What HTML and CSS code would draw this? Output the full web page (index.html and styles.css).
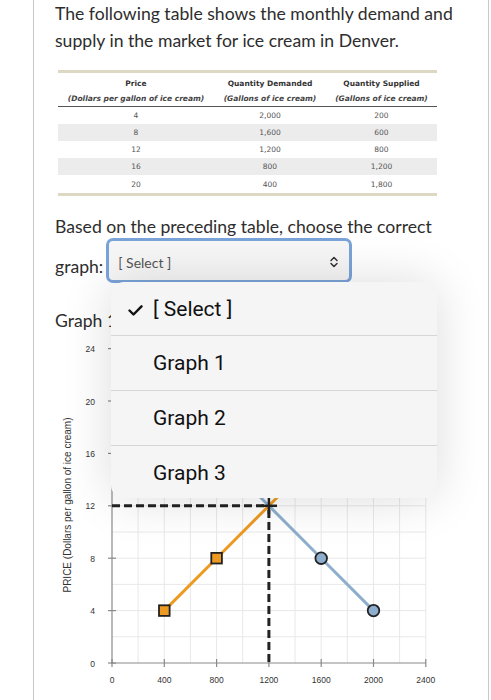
FILE: index.html
```html
<!DOCTYPE html>
<html>
<head>
<meta charset="utf-8">
<link rel="stylesheet" href="styles.css">
</head>
<body>
<div class="frame">
  <p class="intro">The following table shows the monthly demand and supply in the market for ice cream in Denver.</p>
  <table class="data">
    <thead>
      <tr class="h1"><th class="c1">Price</th><th class="c2">Quantity Demanded</th><th class="c3">Quantity Supplied</th></tr>
      <tr class="h2"><th>(Dollars per gallon of ice cream)</th><th>(Gallons of ice cream)</th><th>(Gallons of ice cream)</th></tr>
    </thead>
    <tbody>
      <tr><td>4</td><td>2,000</td><td>200</td></tr>
      <tr class="alt"><td>8</td><td>1,600</td><td>600</td></tr>
      <tr><td>12</td><td>1,200</td><td>800</td></tr>
      <tr class="alt"><td>16</td><td>800</td><td>1,200</td></tr>
      <tr><td>20</td><td>400</td><td>1,800</td></tr>
    </tbody>
  </table>
  <div class="question">
    <div class="qline">Based on the preceding table, choose the correct</div>
    <div class="qrow">
      <span>graph:</span>
      <div class="select">
        <span class="sel-text">[ Select ]</span>
        <svg class="chev" width="10" height="12" viewBox="0 0 10 12"><path d="M2 4.5 L5 1.5 L8 4.5 M2 7.5 L5 10.5 L8 7.5" fill="none" stroke="#333" stroke-width="1.5" stroke-linecap="round" stroke-linejoin="round"/></svg>
      </div>
    </div>
  </div>
  <div class="gtitle">Graph 1</div>
  <svg class="chart" width="454" height="370" viewBox="34 330 454 370">
    <g stroke="#e8e8e8" stroke-width="1">
      <line x1="138.1" y1="334" x2="138.1" y2="675"/><line x1="164.3" y1="334" x2="164.3" y2="675"/>
      <line x1="190.4" y1="334" x2="190.4" y2="675"/><line x1="216.6" y1="334" x2="216.6" y2="675"/>
      <line x1="242.7" y1="334" x2="242.7" y2="675"/><line x1="268.9" y1="334" x2="268.9" y2="675"/>
      <line x1="295" y1="334" x2="295" y2="675"/><line x1="321.2" y1="334" x2="321.2" y2="675"/>
      <line x1="347.3" y1="334" x2="347.3" y2="675"/><line x1="373.5" y1="334" x2="373.5" y2="675"/>
      <line x1="399.6" y1="334" x2="399.6" y2="675"/><line x1="425.8" y1="334" x2="425.8" y2="675"/>
      <line x1="112" y1="648.8" x2="425.8" y2="648.8"/><line x1="112" y1="622.6" x2="425.8" y2="622.6"/>
      <line x1="112" y1="596.4" x2="425.8" y2="596.4"/><line x1="112" y1="570.2" x2="425.8" y2="570.2"/>
      <line x1="112" y1="544" x2="425.8" y2="544"/><line x1="112" y1="517.8" x2="425.8" y2="517.8"/>
      <line x1="112" y1="491.6" x2="425.8" y2="491.6"/><line x1="112" y1="465.4" x2="425.8" y2="465.4"/>
      <line x1="112" y1="439.2" x2="425.8" y2="439.2"/><line x1="112" y1="413" x2="425.8" y2="413"/>
      <line x1="112" y1="386.8" x2="425.8" y2="386.8"/><line x1="112" y1="360.6" x2="425.8" y2="360.6"/>
      <line x1="112" y1="334.4" x2="425.8" y2="334.4"/>
    </g>
    <g stroke="#8a8a8a" stroke-width="1.2">
      <line x1="112" y1="334" x2="112" y2="676"/>
      <line x1="111" y1="675" x2="426" y2="675"/>
      <line x1="108" y1="675" x2="116" y2="675"/><line x1="108" y1="622.6" x2="116" y2="622.6"/>
      <line x1="108" y1="570.2" x2="116" y2="570.2"/><line x1="108" y1="517.8" x2="116" y2="517.8"/>
      <line x1="108" y1="465.4" x2="116" y2="465.4"/><line x1="108" y1="413" x2="116" y2="413"/>
      <line x1="108" y1="360.6" x2="116" y2="360.6"/>
      <line x1="112" y1="671" x2="112" y2="679"/><line x1="164.3" y1="671" x2="164.3" y2="679"/>
      <line x1="216.6" y1="671" x2="216.6" y2="679"/><line x1="268.9" y1="671" x2="268.9" y2="679"/>
      <line x1="321.2" y1="671" x2="321.2" y2="679"/><line x1="373.5" y1="671" x2="373.5" y2="679"/>
      <line x1="425.8" y1="671" x2="425.8" y2="679"/>
    </g>
    <g class="ticks" text-anchor="end">
      <text x="95" y="364">24</text><text x="95" y="416.5">20</text><text x="95" y="469">16</text>
      <text x="95" y="521">12</text><text x="95" y="573.5">8</text><text x="95" y="626">4</text>
      <text x="95" y="678.5">0</text>
    </g>
    <g class="ticks" text-anchor="middle">
      <text x="112" y="695">0</text><text x="164.3" y="695">400</text><text x="216.6" y="695">800</text>
      <text x="268.9" y="695">1200</text><text x="321.2" y="695">1600</text><text x="373.5" y="695">2000</text>
      <text x="425.8" y="695">2400</text>
    </g>
    <text class="ytitle" x="0" y="0" transform="translate(71 517) rotate(-90)" text-anchor="middle">PRICE (Dollars per gallon of ice cream)</text>
    <polyline points="164.3,622.6 216.6,570.2 268.9,517.8 321.2,465.4 373.5,413" fill="none" stroke="#ec9a22" stroke-width="3"/>
    <polyline points="373.5,622.6 321.2,570.2 268.9,517.8 216.6,465.4 164.3,413" fill="none" stroke="#8eaecd" stroke-width="3"/>
    <g stroke="#222" stroke-width="3" stroke-dasharray="8 4">
      <line x1="112" y1="517.8" x2="264" y2="517.8"/>
      <line x1="268.9" y1="522" x2="268.9" y2="675"/>
    </g>
    <g stroke="#222" stroke-width="2.5">
      <line x1="261" y1="517.8" x2="277" y2="517.8"/>
      <line x1="268.9" y1="510" x2="268.9" y2="526"/>
    </g>
    <rect x="159" y="617.3" width="10.6" height="10.6" fill="#ec9a22" stroke="#222" stroke-width="1.8"/>
    <rect x="211.3" y="564.9" width="10.6" height="10.6" fill="#ec9a22" stroke="#222" stroke-width="1.8"/>
    <circle cx="321.2" cy="570.2" r="5.8" fill="#8eaecd" stroke="#222" stroke-width="1.8"/>
    <circle cx="373.5" cy="622.6" r="5.8" fill="#8eaecd" stroke="#222" stroke-width="1.8"/>
  </svg>
  <div class="menu">
    <div class="item first"><svg class="check" width="15" height="11" viewBox="0 0 15 11"><path d="M1.5 5.5 L5.5 9.5 L13.5 1.3" fill="none" stroke="#111" stroke-width="2.4" stroke-linecap="round" stroke-linejoin="round"/></svg>[ Select ]</div>
    <div class="item">Graph 1</div>
    <div class="item">Graph 2</div>
    <div class="item">Graph 3</div>
  </div>
</div>
</body>
</html>
```

FILE: styles.css
```css
html, body {
  margin: 0;
  padding: 0;
  background: #ffffff;
}
body {
  width: 491px;
  height: 700px;
  overflow: hidden;
}
.frame {
  position: relative;
  margin-left: 33px;
  width: 433px;
  height: 700px;
  padding-left: 21px;
  border-left: 1px solid #c8c8c8;
  border-right: 1px solid #c8c8c8;
  font-family: Lato, "Liberation Sans", sans-serif;
  color: #2d2d2d;
}
.intro {
  margin: 0;
  font-size: 17.6px;
  line-height: 27px;
}
.data {
  margin: 16px 0 0 3px;
  width: 379px;
  border-collapse: collapse;
  font-family: "DejaVu Sans", Verdana, sans-serif;
  font-size: 7.5px;
  color: #333;
  border-top: 3px solid #dcd8c4;
  border-bottom: 3px solid #dcd8c4;
}
.data th {
  font-weight: bold;
  text-align: center;
  padding: 0;
}
.data .c1 { width: 156px; }
.data .c2 { width: 112px; }
.data .c3 { width: 111px; }
.data .h1 th { height: 15px; padding-top: 3px; vertical-align: middle; }
.data .h2 th { font-style: italic; height: 15px; color: #444; border-bottom: 1px solid #555; vertical-align: middle; }
.data td {
  text-align: center;
  height: 17px;
  padding: 0;
  color: #555;
}
.data tr.alt td { background: #ececec; }
.data tbody tr:last-child td { height: 18px; }
.question {
  margin-top: 17px;
  font-size: 17.6px;
}
.qline {
  line-height: 28px;
}
.qrow {
  display: flex;
  align-items: center;
  gap: 3px;
  margin-top: -3px;
}
.qrow > span {
  padding-top: 12px;
}
.select {
  box-sizing: border-box;
  width: 246px;
  height: 45px;
  border: 3px solid #7aa3d8;
  border-radius: 7px;
  background: #f6f6f6;
  display: flex;
  align-items: center;
  justify-content: space-between;
  padding: 0 10px 0 9px;
}
.sel-text {
  font-size: 14px;
  color: #555;
  padding-top: 4px;
}
.chev {
  margin-top: 2px;
}
.gtitle {
  font-size: 17.6px;
  line-height: 24px;
  margin-top: 26px;
}
.chart {
  display: block;
  margin: -15px 0 0 -21px;
}
.ticks text {
  font-family: "Liberation Sans", Arial, sans-serif;
  font-size: 8.5px;
  fill: #333;
}
.ytitle {
  font-family: "Liberation Sans", Arial, sans-serif;
  font-size: 10px;
  fill: #333;
}
.menu {
  position: absolute;
  left: 77px;
  top: 282px;
  width: 326px;
  height: 216px;
  background: #f5f5f5;
  border-radius: 13px;
  box-shadow: 0 0 50px rgba(0,0,0,0.14);
  overflow: hidden;
  font-family: Roboto, "Noto Sans", sans-serif;
  font-size: 21px;
  color: #111;
}
.item {
  box-sizing: border-box;
  height: 55px;
  display: flex;
  align-items: center;
  padding-left: 42px;
  border-top: 1px solid #d6d6d6;
}
.item.first {
  height: 53px;
  border-top: none;
  padding-left: 17px;
}
.check {
  margin-right: 10px;
  margin-top: 3px;
}
```
